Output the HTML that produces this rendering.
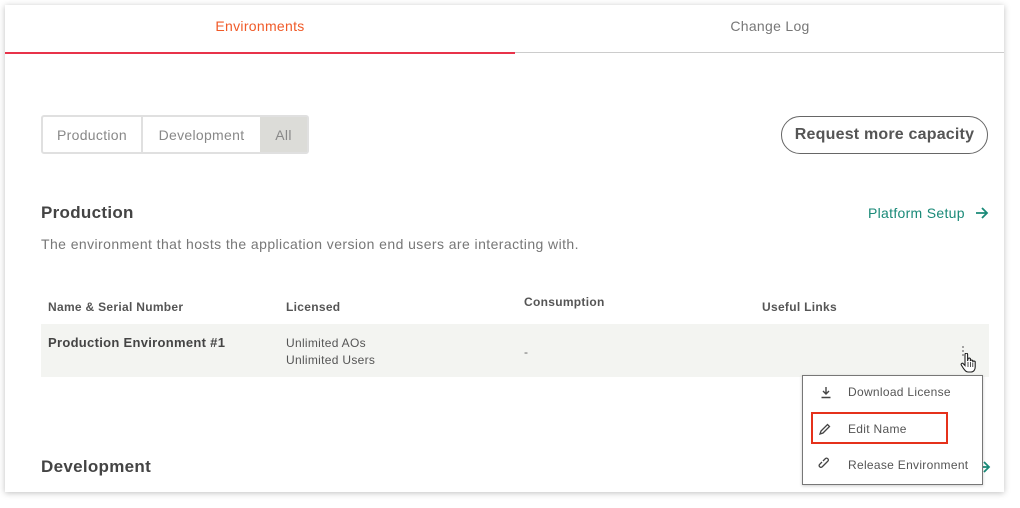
<!DOCTYPE html>
<html><head><meta charset="utf-8"><style>
*{box-sizing:border-box;margin:0;padding:0}
body{width:1020px;height:508px;background:#fff;font-family:"Liberation Sans",sans-serif;position:relative;overflow:hidden;letter-spacing:.3px}
.card{position:absolute;left:5px;top:5px;width:999px;height:487px;background:#fff;box-shadow:0 1px 6px rgba(0,0,0,.25);overflow:hidden}
.a{position:absolute;white-space:nowrap}
</style></head><body>
<div class="card">
 <div class="a" style="left:0;top:13px;width:510px;text-align:center;color:#f05a28;font-size:14px">Environments</div>
 <div class="a" style="left:510px;top:13px;width:510px;text-align:center;color:#777;font-size:14px">Change Log</div>
 <div class="a" style="left:0;top:47px;width:510px;height:2px;background:#e8334a"></div>
 <div class="a" style="left:510px;top:47px;width:489px;height:1px;background:#ccc"></div>

 <div class="a" style="left:36px;top:110px;width:268px;height:39px;border:2px solid #e0e0e0;border-radius:3px;display:flex;font-size:14px;color:#888">
  <div style="width:100px;border-right:2px solid #e0e0e0;display:flex;align-items:center;justify-content:center">Production</div>
  <div style="width:117px;display:flex;align-items:center;justify-content:center">Development</div>
  <div style="flex:1;background:#dcdcd8;display:flex;align-items:center;justify-content:center">All</div>
 </div>

 <div class="a" style="left:776px;top:111px;width:207px;height:38px;border:1.5px solid #666;border-radius:19px;display:flex;align-items:center;justify-content:center;font-size:16px;font-weight:bold;color:#555;letter-spacing:.2px">Request more capacity</div>

 <div class="a" style="left:36px;top:198px;font-size:17px;font-weight:bold;color:#444">Production</div>
 <div class="a" style="left:863px;top:200px;font-size:14px;color:#1a8a78">Platform Setup</div>
 <svg class="a" style="left:970px;top:201px" width="14" height="14" viewBox="0 0 14 14"><path d="M1 7 H12 M7 2 L12 7 L7 12" fill="none" stroke="#1a8a78" stroke-width="1.8"/></svg>
 <div class="a" style="left:36px;top:231px;font-size:14px;color:#777;letter-spacing:.42px">The environment that hosts the application version end users are interacting with.</div>

 <div class="a" style="left:43px;top:295px;font-size:12px;font-weight:bold;color:#555">Name &amp; Serial Number</div>
 <div class="a" style="left:281px;top:295px;font-size:12px;font-weight:bold;color:#555">Licensed</div>
 <div class="a" style="left:519px;top:290px;font-size:12px;font-weight:bold;color:#555">Consumption</div>
 <div class="a" style="left:757px;top:295px;font-size:12px;font-weight:bold;color:#555">Useful Links</div>

 <div class="a" style="left:36px;top:319px;width:948px;height:53px;background:#f3f4f1"></div>
 <div class="a" style="left:43px;top:330px;font-size:13px;font-weight:bold;color:#444">Production Environment #1</div>
 <div class="a" style="left:281px;top:330px;font-size:12px;color:#555;line-height:17px">Unlimited AOs<br>Unlimited Users</div>
 <div class="a" style="left:519px;top:340px;font-size:12px;color:#666">-</div>
 <svg class="a" style="left:955px;top:340px" width="6" height="14" viewBox="0 0 6 14"><circle cx="3" cy="2" r="1" fill="#888"/><circle cx="3" cy="6" r="1" fill="#888"/><circle cx="3" cy="10" r="1" fill="#888"/></svg>
 <svg class="a" style="left:955px;top:348px" width="18" height="20" viewBox="0 0 18 20"><path d="M5 1.5 a1.3 1.3 0 0 1 2.6 0 V8 L8 6 a1.2 1.2 0 0 1 2.4 0.5 V8 a1.2 1.2 0 0 1 2.4 0.5 V9 a1.2 1.2 0 0 1 2.4 0.5 V14 C15.2 17 13.5 19 11 19 H8 C6 19 5 17.5 3.5 15.5 L1.3 12 a1.2 1.2 0 0 1 2 -1.3 L5 12.5 Z" fill="#fff" stroke="#222" stroke-width="1.1"/><path d="M8 9 V14 M10.4 9 V14 M12.8 9.5 V14" stroke="#222" stroke-width=".8"/></svg>

 <div class="a" style="left:36px;top:452px;font-size:17px;font-weight:bold;color:#444">Development</div>
 <svg class="a" style="left:972px;top:455px" width="14" height="14" viewBox="0 0 14 14"><path d="M1 7 H12 M7 2 L12 7 L7 12" fill="none" stroke="#1a8a78" stroke-width="1.8"/></svg>

 <div class="a" style="left:797px;top:370px;width:181px;height:110px;background:#fff;border:1.5px solid #777;box-shadow:0 1px 3px rgba(0,0,0,.2)"></div>
 <svg class="a" style="left:815px;top:381px" width="12" height="13" viewBox="0 0 12 13"><path d="M6 1 V8 M3 5 L6 8 L9 5 M1.5 11.5 H10.5" fill="none" stroke="#444" stroke-width="1.4"/></svg>
 <div class="a" style="left:843px;top:380px;font-size:12px;color:#555">Download License</div>
 <div class="a" style="left:806px;top:407px;width:137px;height:32px;border:2px solid #e5311b"></div>
 <svg class="a" style="left:813px;top:417px" width="14" height="14" viewBox="0 0 14 14"><path d="M2 12 L3 9 L9.5 2.5 L11.5 4.5 L5 11 Z" fill="none" stroke="#444" stroke-width="1.3"/></svg>
 <div class="a" style="left:843px;top:417px;font-size:12px;color:#555">Edit Name</div>
 <svg class="a" style="left:813px;top:452px" width="14" height="14" viewBox="0 0 14 14"><path d="M6 8 L4 10 a1.8 1.8 0 0 1 -2.5 -2.5 L4 5 M8 6 L10 4 a1.8 1.8 0 0 0 -2.5 -2.5 L5 4 M5 9 L9 5" fill="none" stroke="#444" stroke-width="1.3"/></svg>
 <div class="a" style="left:843px;top:453px;font-size:12px;color:#555">Release Environment</div>
</div>
</body></html>
